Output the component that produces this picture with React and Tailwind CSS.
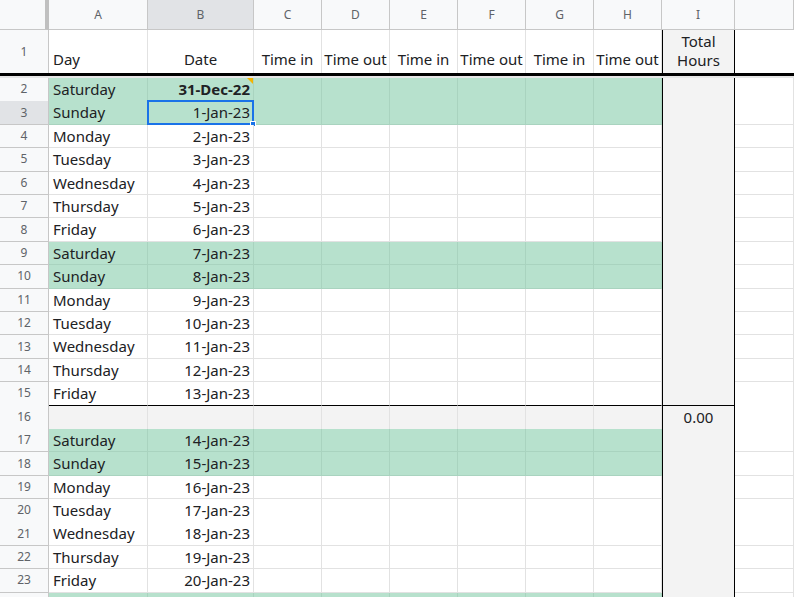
const COLS = "grid grid-cols-[49px_99px_106px_68px_68px_68px_68px_68px_68px_73px_1fr]";
const LETTERS = ["A", "B", "C", "D", "E", "F", "G", "H", "I", ""];

const ROWS = [
  [2, "Saturday", "31-Dec-22"],
  [3, "Sunday", "1-Jan-23"],
  [4, "Monday", "2-Jan-23"],
  [5, "Tuesday", "3-Jan-23"],
  [6, "Wednesday", "4-Jan-23"],
  [7, "Thursday", "5-Jan-23"],
  [8, "Friday", "6-Jan-23"],
  [9, "Saturday", "7-Jan-23"],
  [10, "Sunday", "8-Jan-23"],
  [11, "Monday", "9-Jan-23"],
  [12, "Tuesday", "10-Jan-23"],
  [13, "Wednesday", "11-Jan-23"],
  [14, "Thursday", "12-Jan-23"],
  [15, "Friday", "13-Jan-23"],
  [16, null, null],
  [17, "Saturday", "14-Jan-23"],
  [18, "Sunday", "15-Jan-23"],
  [19, "Monday", "16-Jan-23"],
  [20, "Tuesday", "17-Jan-23"],
  [21, "Wednesday", "18-Jan-23"],
  [22, "Thursday", "19-Jan-23"],
  [23, "Friday", "20-Jan-23"],
  [24, "Saturday", ""],
];

function Row({ n, day, date }) {
  const weekend = day === "Saturday" || day === "Sunday";
  const total = n === 16;
  const fill = total ? "bg-[#f3f3f3]" : weekend ? "bg-[#b7e1cd]" : "bg-white";
  const line = weekend ? "border-[#a9d3bf]" : "border-[#e2e2e2]";
  const edge = total ? "border-y border-y-black" : "";
  const label = n === 24 ? "" : day;
  return (
    <div className={`${COLS} h-[23.4px]`}>
      <div className={`flex items-center justify-center border-r border-b border-[#c7c7c7] text-[12px] text-[#5f6368] ${n === 3 ? "bg-[#e1e3e6]" : "bg-[#f8f9fa]"}`}>
        {n === 24 ? "" : n}
      </div>
      <div className={`flex items-center border-r border-b ${line} ${fill} ${edge} pl-[4px] text-[15px]`}>{label}</div>
      <div className={`relative flex items-center justify-end border-r border-b ${line} ${fill} ${edge} pr-[3px] text-[15px] ${n === 2 ? "font-bold" : ""}`}>
        {date}
        {n === 2 && <span className="absolute right-0 top-0 h-0 w-0 border-l-[6px] border-t-[6px] border-l-transparent border-t-[#f4b400]" />}
        {n === 3 && (
          <>
            <span className="absolute inset-[-1px] border-2 border-[#1a73e8]" />
            <span className="absolute bottom-[-3px] right-[-3px] h-[6px] w-[6px] border border-white bg-[#1a73e8]" />
          </>
        )}
      </div>
      {[0, 1, 2, 3, 4, 5].map((i) => (
        <div key={i} className={`border-r border-b ${line} ${fill} ${edge}`} />
      ))}
      <div className={`flex items-center justify-center border-x border-x-black bg-[#f3f3f3] text-[15px] ${total ? "border-y border-y-black" : ""}`}>
        {total ? "0.00" : ""}
      </div>
      <div className="border-r border-b border-[#e2e2e2] bg-white" />
    </div>
  );
}

export default function App() {
  return (
    <div className="h-[597px] w-[794px] overflow-hidden bg-white font-['Liberation_Sans',Arial,sans-serif] text-[#202124]">
      <div className={`${COLS} h-[30px] bg-[#f8f9fa]`}>
        <div className="border-r-4 border-b border-r-[#c0c0c0] border-b-[#c7c7c7]" />
        {LETTERS.map((l, i) => (
          <div
            key={i}
            className={`flex items-center justify-center border-r border-b border-[#c7c7c7] text-[12px] text-[#5f6368] ${l === "B" ? "bg-[#e1e3e6]" : ""}`}
          >
            {l}
          </div>
        ))}
      </div>
      <div className={`${COLS} h-[46px] border-b-[3px] border-black`}>
        <div className="flex items-center justify-center border-r border-[#c7c7c7] bg-[#f8f9fa] text-[12px] text-[#5f6368]">1</div>
        <div className="flex items-end border-r border-[#e2e2e2] pb-[3px] pl-[4px] text-[15px]">Day</div>
        <div className="flex items-end justify-center border-r border-[#e2e2e2] pb-[3px] text-[15px]">Date</div>
        {["Time in", "Time out", "Time in", "Time out", "Time in", "Time out"].map((t, i) => (
          <div key={i} className="flex items-end justify-center border-r border-[#e2e2e2] pb-[3px] text-[15px]">{t}</div>
        ))}
        <div className="flex flex-col items-center justify-end border-x border-black bg-[#f3f3f3] pb-[3px] text-[15px] leading-[19px]">
          <span>Total</span>
          <span>Hours</span>
        </div>
        <div />
      </div>
      <div className="h-[2px] bg-[#e6e6e6]" />
      {ROWS.map(([n, day, date]) => (
        <Row key={n} n={n} day={day} date={date} />
      ))}
    </div>
  );
}
